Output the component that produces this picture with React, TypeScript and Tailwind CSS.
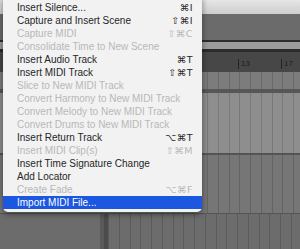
import React from 'react';

type Item = { label: string; keys?: string; disabled?: boolean; active?: boolean };

const items: Item[] = [
  { label: 'Insert Silence...', keys: '⌘I' },
  { label: 'Capture and Insert Scene', keys: '⇧⌘I' },
  { label: 'Capture MIDI', keys: '⇧⌘C', disabled: true },
  { label: 'Consolidate Time to New Scene', disabled: true },
  { label: 'Insert Audio Track', keys: '⌘T' },
  { label: 'Insert MIDI Track', keys: '⇧⌘T' },
  { label: 'Slice to New MIDI Track', disabled: true },
  { label: 'Convert Harmony to New MIDI Track', disabled: true },
  { label: 'Convert Melody to New MIDI Track', disabled: true },
  { label: 'Convert Drums to New MIDI Track', disabled: true },
  { label: 'Insert Return Track', keys: '⌥⌘T' },
  { label: 'Insert MIDI Clip(s)', keys: '⇧⌘M', disabled: true },
  { label: 'Insert Time Signature Change' },
  { label: 'Add Locator' },
  { label: 'Create Fade', keys: '⌥⌘F', disabled: true },
  { label: 'Import MIDI File...', active: true },
];

function Grid({ className }: { className: string }) {
  // vertical bar lines of the arrangement grid
  return (
    <div className={`flex ${className}`}>
      <div className="w-[207px] shrink-0" />
      {Array.from({ length: 9 }).map((_, i) => (
        <div key={i} className="w-[10.75px] shrink-0 border-l border-black/15" />
      ))}
    </div>
  );
}

function Background() {
  return (
    <div className="flex flex-col">
      <div className="h-[14px] bg-gradient-to-b from-[#e6e6e6] to-[#cdcdcd]" />
      <div className="h-[26px] bg-[#6b6b6b]" />
      <div className="h-[2px] bg-[#2c2c2c]" />
      <div className="h-[7px] bg-[#9b9b9b]" />
      <div className="h-[3px] bg-[#2b2b2b]" />
      <div className="relative h-[20px] bg-[#474747]">
        <span className="absolute left-[238px] top-[7px] border-l border-[#222] pl-[2px] text-[8px] leading-[10px] text-[#1e1e1e] [font-family:'Liberation_Sans',sans-serif]">
          13
        </span>
        <span className="absolute left-[281px] top-[7px] border-l border-[#222] pl-[2px] text-[8px] leading-[10px] text-[#1e1e1e] [font-family:'Liberation_Sans',sans-serif]">
          17
        </span>
      </div>
      <Grid className="h-[17px] bg-[#7c7c7c]" />
      <div className="h-[4px] bg-[#575757]" />
      <Grid className="h-[60px] bg-[#8e8e8e]" />
      <div className="h-[2px] bg-[#545454]" />
      <Grid className="h-[58px] bg-[#767676]" />
      <div className="h-[1px] bg-[#555]" />
      <div className="flex h-[35px] bg-[#6c6c6c]">
        <div className="w-[100px] shrink-0" />
        <div className="w-[4px] shrink-0 bg-[#5a5a5a]" />
        <div className="w-[4px] shrink-0 bg-[#4c4c4c]" />
        {Array.from({ length: 18 }).map((_, i) => (
          <div key={i} className="w-[10.75px] shrink-0 border-l border-black/15" />
        ))}
      </div>
    </div>
  );
}

export default function App() {
  return (
    <div className="relative h-[249px] w-[300px] overflow-hidden bg-[#6c6c6c]">
      <Background />
      <div className="absolute left-[3px] top-[-4px] w-[199px] rounded-b-[5px] bg-[#f2f2f2] pb-[3px] pt-[5px] shadow-[0_2px_6px_rgba(0,0,0,0.45)] [font-family:'Liberation_Sans',Arial,sans-serif]">
        {items.map((it) => (
          <div
            key={it.label}
            className={`flex h-[13px] items-center justify-between pl-[14px] pr-[9px] text-[10px] leading-[13px] whitespace-nowrap ${
              it.active ? 'bg-[#1b57e0] text-white' : it.disabled ? 'text-[#b8b8b8]' : 'text-[#262626]'
            }`}
          >
            <span>{it.label}</span>
            {it.keys && (
              <span className="text-[9.5px] tracking-[0.5px] [font-family:'DejaVu_Sans',sans-serif]">{it.keys}</span>
            )}
          </div>
        ))}
      </div>
    </div>
  );
}
